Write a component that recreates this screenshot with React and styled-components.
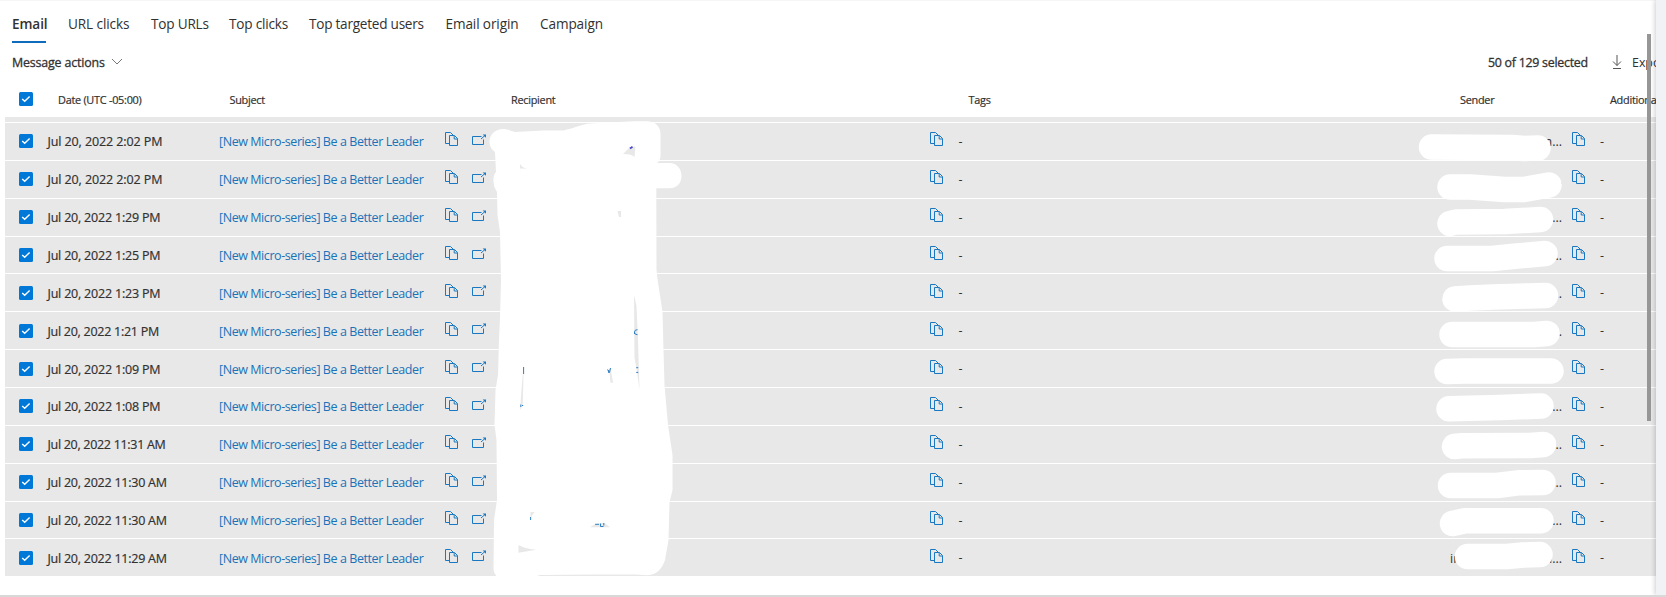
import React from "react";
import styled, { createGlobalStyle } from "styled-components";

const GlobalStyle = createGlobalStyle`
  * {
    box-sizing: border-box;
  }
  body {
    margin: 0;
    background-color: #fff;
    font-family: "Open Sans", "Noto Sans", sans-serif;
    color: #323130;
    overflow: hidden;
  }
`;

const Page = styled.div`
  position: relative;
  display: flex;
  width: 1666px;
  height: 597px;
  overflow: hidden;
  border-bottom: 2px solid #d8d8d8;
`;

const Panel = styled.main`
  width: 1656px;
  height: 597px;
  overflow: hidden;
  border-top: 1px solid #f6f6f6;
`;

const Gutter = styled.div`
  position: relative;
  width: 10px;
  background-color: #f0f2f5;
  box-shadow: -1px 0 5px rgba(0, 0, 0, 0.2);
`;

const Tabs = styled.nav`
  display: flex;
  height: 42px;
  padding-left: 12px;
`;

const Tab = styled.a`
  width: ${({ width }) => width}px;
  margin-right: 22px;
  padding-top: 13px;
  font-size: 13.6px;
  line-height: 20px;
  letter-spacing: ${({ $spacing }) => $spacing || 0}px;
  white-space: nowrap;
  font-weight: ${({ $active }) => ($active ? 600 : 400)};
  border-bottom: ${({ $active }) => ($active ? "solid 2px #0f6cbd" : "none")};
`;

const Toolbar = styled.div`
  display: flex;
  align-items: center;
  height: 38px;
  padding-left: 12px;
  font-size: 12.4px;
  white-space: nowrap;
`;

const MessageActions = styled.div`
  display: flex;
  flex: none;
  align-items: center;
  width: 1476px;
`;

const ActionLabel = styled.span`
  width: 99px;
  letter-spacing: -0.16px;
  -webkit-text-stroke: 0.3px #323130;
`;

const Selected = styled.span`
  flex: none;
  width: 123px;
  letter-spacing: -0.26px;
  -webkit-text-stroke: 0.3px #323130;
`;

const Export = styled.div`
  display: flex;
  align-items: center;
  gap: 9px;
`;

const Columns = styled.div`
  display: grid;
  grid-template-columns: 14px 172px 292px 458px 475px 226px;
  align-items: center;
  padding-left: 14px;
`;

const HeaderRow = styled(Columns)`
  height: 36px;
  margin-left: 5px;
  font-size: 10.9px;
  letter-spacing: -0.27px;
  -webkit-text-stroke: 0.2px #323130;
  white-space: nowrap;
`;

const HeaderCell = styled.div`
  padding-left: ${({ $indent }) => $indent}px;
  padding-top: 1px;
`;

const HeaderPair = styled.div`
  display: flex;
  padding-left: 30px;
`;

const SenderHeader = styled(HeaderCell)`
  flex: none;
  width: 150px;
`;

const Table = styled.section`
  margin-left: 5px;
  padding-top: 5px;
  background-color: #e8e8e8;
`;

const Row = styled(Columns)`
  height: 37.87px;
  border-top: 1px solid #fff;
  font-size: 12.5px;
  white-space: nowrap;
`;

const Checkbox = styled.span`
  display: flex;
  align-items: center;
  justify-content: center;
  width: 14px;
  height: 14px;
  border-radius: 1.5px;
  background-color: #0078d7;
`;

const DateCell = styled.div`
  padding: 1px 0 0 14.5px;
  letter-spacing: ${({ $spacing }) => $spacing}px;
  -webkit-text-stroke: 0.2px #323130;
`;

const SubjectCell = styled.div`
  display: flex;
  align-items: center;
  padding-left: 14px;
  color: #1a72b8;
`;

const Subject = styled.a`
  flex: none;
  width: 226px;
  padding-top: 1px;
  letter-spacing: -0.43px;
`;

const IconCell = styled.div`
  display: flex;
  align-items: center;
  gap: ${({ $gap }) => $gap || 13}px;
  padding-left: ${({ $indent }) => $indent || 0}px;
`;

const SenderCell = styled.div`
  display: flex;
  flex: none;
  justify-content: space-between;
  width: 112px;
  margin-right: -4px;
  padding-top: 1px;
`;

const StyledIcon = styled.svg`
  display: block;
  flex: none;
  position: relative;
  top: -1.5px;
  fill: none;
  stroke: #1a78c2;
`;

const Covers = styled.svg`
  position: absolute;
  top: 0;
  left: 0;
  pointer-events: none;
`;

const ScrollThumb = styled.div`
  position: absolute;
  top: 34px;
  left: 1647px;
  width: 4px;
  height: 387px;
  background-color: #969696;
`;

const tabs = [
  { label: "Email", width: 34, active: true, spacing: -0.1 },
  { label: "URL clicks", width: 61, spacing: -0.1 },
  { label: "Top URLs", width: 56, spacing: -0.2 },
  { label: "Top clicks", width: 58, spacing: -0.2 },
  { label: "Top targeted users", width: 114.5, spacing: -0.25 },
  { label: "Email origin", width: 72.5, spacing: -0.12 },
  { label: "Campaign", width: 63, spacing: -0.1 },
];

const rows = [
  { date: "Jul 20, 2022 2:02 PM", spacing: -0.1, end: "n..." },
  { date: "Jul 20, 2022 2:02 PM", spacing: -0.1 },
  { date: "Jul 20, 2022 1:29 PM", spacing: -0.2 },
  { date: "Jul 20, 2022 1:25 PM", spacing: -0.2 },
  { date: "Jul 20, 2022 1:23 PM", spacing: -0.2 },
  { date: "Jul 20, 2022 1:21 PM", spacing: -0.27 },
  { date: "Jul 20, 2022 1:09 PM", spacing: -0.2 },
  { date: "Jul 20, 2022 1:08 PM", spacing: -0.2 },
  { date: "Jul 20, 2022 11:31 AM", spacing: -0.3 },
  { date: "Jul 20, 2022 11:30 AM", spacing: -0.24 },
  { date: "Jul 20, 2022 11:30 AM", spacing: -0.24 },
  { date: "Jul 20, 2022 11:29 AM", spacing: -0.24, start: "in", end: "n..." },
];

// marker strokes over the sender names
const senderStrokes = [
  "M1431.5 147L1512 147.5L1524 148.5L1538 148",
  "M1450 187L1470 187L1505 189.5L1524 189.5L1549 185",
  "M1450 223.5L1456 222L1505 221.5L1540.5 219.5",
  "M1447 258.5L1492 258.5L1517 256L1529 255L1545 253.5",
  "M1455 299L1470 298L1493 297L1528 296L1545.5 295.5",
  "M1452 334.5L1534 334.5L1547 333.5",
  "M1447 371.5L1465 371L1551 371",
  "M1449 408.7L1500 407.5L1541 406",
  "M1454.5 446.5L1462 445.7L1530 445.5L1543.5 444.5",
  "M1450.5 485.5L1497 485.5L1520 482.7L1543 482.5",
  "M1452.5 523.5L1465 520.7L1541 520.7",
  "M1467.5 556.5L1507 556.5L1523 555L1540 554.5",
];

const recipientCover =
  "M489.5 142C489.5 134 496 129 503 129C508 129 511 131 515 132L543 130.5L563 130.5C575 128 583 124 590 123.5L634 121.3L648 121.3C656 122 660.5 127 660.5 134L660.5 157Q660 161 657 163H669.5C677 163 681.5 169 681.5 176C681.5 183 677 188.3 669.5 188.3H656.3L656.5 270C658 285 661 300 662.5 312L663.5 350L664.5 385L668 425L672.5 455L672.5 490L669.5 502L668.5 540L665 560C662 569 656 575 648 575.2L635 574.5L596 574.5L540 575Q534 577 525 577H497Q493.5 573 493.5 569L494 520L497 500L496.5 440L494.5 425L495.5 390L498 375L499 340L500 318L501 280L500 232L497.5 215L497 192Q493.5 187 493.5 182Q493 175 496 172L495 152Q489.5 148 489.5 142Z";

// spots the marker missed
const gaps = [
  "M623 154L630 147L635.5 146.5L634.5 157Q632 154 623 154Z",
  "M520 164Q522 168 527.5 168.5H520Z",
  "M617.5 211H621V217H619Z",
  "M634 295L636.5 306L638 340L639.5 390L637 372L634.5 358Z",
  "M523.7 363L523.5 376L522.7 405L520 410L521.5 390Z",
  "M607 371L610.5 367.5L613 382.7H610.5L609.5 373Z",
  "M530.5 512H534.5Q531.5 515 530.7 520Z",
  "M590 527.3Q595 523 604 522.7L610 527.3Z",
  "M518.5 545Q524 548.5 536 549.7L518.5 552.7Z",
];

const specks = [
  "M634.5 334V332Q634.5 329.7 637.5 329.7M634.5 332.5Q634.5 334.7 637.5 334.7",
  "M636.2 367.7H638.2M636.2 372.4H638.2",
  "M607.5 369.5L609.5 372.5L610.5 368M608.7 370V373",
  "M520.8 404.5V407M522 405.5H523.2",
  "M523.6 367V374",
  "M595 524.3H599M600.5 523.5V526.5H603.5M603.8 523V525.5",
  "M530.6 517V520",
];

const CopyIcon = () => (
  <StyledIcon width="14" height="15" viewBox="0 0 14 15">
    <path d="M4 11.5H.5V.5H5.5L8 3" />
    <path d="M4.5 3.5H9.5L12.5 6.5V13.5H4.5Z" />
    <path d="M9.2 3.8V7H12.5" />
  </StyledIcon>
);

const OpenIcon = () => (
  <StyledIcon width="15" height="12" viewBox="0 0 15 12">
    <path d="M9.5 2.5H.5V10.5H11.5V5.5" />
    <path d="M9 5L13 1.5" />
    <path d="M10.7 .5H14V3.8Z" fill="#1a78c2" stroke="none" />
  </StyledIcon>
);

const Check = () => (
  <Checkbox>
    <svg width="10" height="8" viewBox="0 0 10 8" fill="none" stroke="#fff" strokeWidth="1.4">
      <path d="M1.2 4L3.7 6.3L8.6 1.4" />
    </svg>
  </Checkbox>
);

const App = () => {
  return (
    <Page>
      <GlobalStyle />
      <Panel>
        <Tabs>
          {tabs.map(({ label, width, active, spacing }) => (
            <Tab key={label} width={width} $active={active} $spacing={spacing}>
              {label}
            </Tab>
          ))}
        </Tabs>
        <Toolbar>
          <MessageActions>
            <ActionLabel>Message actions</ActionLabel>
            <svg width="12" height="8" viewBox="0 0 12 8" fill="none" stroke="#777">
              <path d="M1 1L6 6L11 1" />
            </svg>
          </MessageActions>
          <Selected>50 of 129 selected</Selected>
          <Export>
            <svg width="12" height="16" viewBox="0 0 12 16" fill="none" stroke="#555">
              <path d="M6 1V11.5M2 7.5L6 11.5L10 7.5M2 14.5H10" />
            </svg>
            Export
          </Export>
        </Toolbar>
        <HeaderRow>
          <Check />
          <HeaderCell $indent={25}>Date (UTC -05:00)</HeaderCell>
          <HeaderCell $indent={24.5}>Subject</HeaderCell>
          <HeaderCell $indent={14}>Recipient</HeaderCell>
          <HeaderCell $indent={13.5}>Tags</HeaderCell>
          <HeaderPair>
            <SenderHeader>Sender</SenderHeader>
            <HeaderCell>Additional action</HeaderCell>
          </HeaderPair>
        </HeaderRow>
        <Table>
          {rows.map((row, i) => (
            <Row key={i}>
              <Check />
              <DateCell $spacing={row.spacing}>{row.date}</DateCell>
              <SubjectCell>
                <Subject>[New Micro-series] Be a Better Leader</Subject>
                <IconCell>
                  <CopyIcon />
                  <OpenIcon />
                </IconCell>
              </SubjectCell>
              <IconCell $indent={433}>
                <CopyIcon />
              </IconCell>
              <IconCell $indent={3.5}>-</IconCell>
              <IconCell $indent={20} $gap={14}>
                <SenderCell>
                  <span>{row.start}</span>
                  <span>{row.end || "..."}</span>
                </SenderCell>
                <CopyIcon />
                -
              </IconCell>
            </Row>
          ))}
        </Table>
      </Panel>
      <Covers width="1666" height="597" fill="#fff">
        <path d={recipientCover} />
        {gaps.map((d) => (
          <path key={d} d={d} fill="#e8e8e8" />
        ))}
        {specks.map((d) => (
          <path key={d} d={d} fill="none" stroke="#2f80c4" />
        ))}
        <path d="M630 148.5L632.5 146.7" stroke="#4a4ac8" strokeWidth="1.8" />
        {senderStrokes.map((d) => (
          <path key={d} d={d} fill="none" stroke="#fff" strokeWidth="25.5" strokeLinecap="round" strokeLinejoin="round" />
        ))}
      </Covers>
      <Gutter />
      <ScrollThumb />
    </Page>
  );
};

export default App;
